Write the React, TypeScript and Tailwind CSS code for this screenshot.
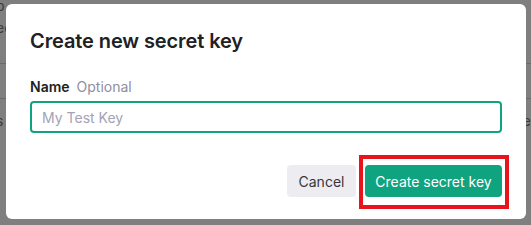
export default function App() {
    return (
        <div className="relative w-[531px] h-[225px] overflow-hidden bg-[#7f7f7f] font-['Inter','Noto_Sans',sans-serif]">
            {/* page behind the overlay, dimmed */}
            <div className="flex flex-col text-[14px] leading-[20px] text-[#3b3b3b] -ml-[4px]">
                <div className="h-[22px] -mt-[4px]">p</div>
                <div className="h-[20px]">ec</div>
                <div className="h-[26px] border-b border-[#6a6a6a]" />
                <div className="h-[35px] border-b border-[#6a6a6a]" />
                <div className="flex justify-between w-[535px] pt-[12px]">
                    <span>s</span>
                    <span className="pr-[0px]">e</span>
                </div>
            </div>

            {/* modal */}
            <div className="absolute left-[6px] top-[4px] w-[520px] h-[215px] bg-white rounded-[6px] px-6 pt-[23px]">
                <h2 className="text-[20px] leading-[28px] font-semibold text-[#202123] tracking-[-0.1px]">
                    Create new secret key
                </h2>
                <div className="mt-[22px] flex items-baseline gap-[7px] text-[14px] leading-[20px]">
                    <span className="font-semibold text-[#202123]">Name</span>
                    <span className="text-[#8e8ea0]">Optional</span>
                </div>
                <input
                    type="text"
                    placeholder="My Test Key"
                    className="mt-[4px] w-full h-[32px] rounded-[4px] border-2 border-[#10a37f] px-[10px] text-[14px] text-[#202123] placeholder:text-[#a3a3b5] outline-none"
                />
                <div className="mt-[32px] flex justify-end items-center gap-[9px]">
                    <button className="h-[32px] w-[69px] rounded-[4px] bg-[#ececf1] text-[14px] text-[#353740]">
                        Cancel
                    </button>
                    <div className="relative">
                        <button className="h-[32px] w-[137px] rounded-[4px] bg-[#10a37f] text-[14px] text-white">
                            Create secret key
                        </button>
                        {/* highlight annotation */}
                        <div className="absolute -left-[6px] -top-[10px] -right-[7px] -bottom-[12px] border-4 border-[#e8141c]" />
                    </div>
                </div>
            </div>
        </div>
    );
}
